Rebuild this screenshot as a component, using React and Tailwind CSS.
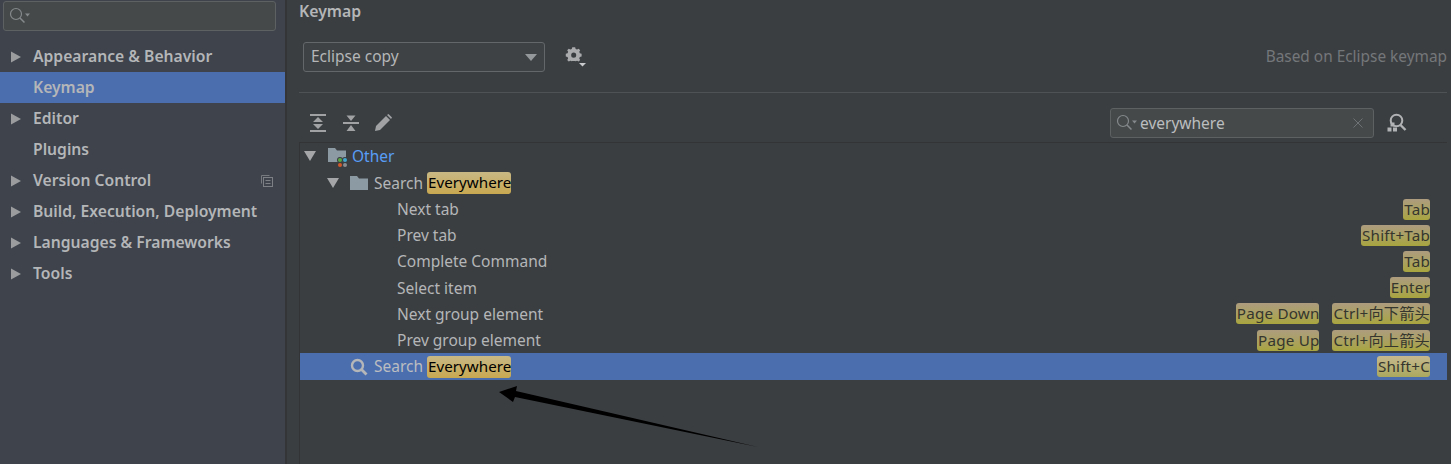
import React from 'react';

const font = { fontFamily: '"Noto Sans", "Noto Sans CJK SC", sans-serif' };

const sections = [
  { name: 'Appearance & Behavior', arrow: true },
  { name: 'Keymap', active: true },
  { name: 'Editor', arrow: true },
  { name: 'Plugins' },
  { name: 'Version Control', arrow: true, copy: true },
  { name: 'Build, Execution, Deployment', arrow: true },
  { name: 'Languages & Frameworks', arrow: true },
  { name: 'Tools', arrow: true },
];

const actions = [
  { name: 'Next tab', keys: ['Tab'] },
  { name: 'Prev tab', keys: ['Shift+Tab'] },
  { name: 'Complete Command', keys: ['Tab'] },
  { name: 'Select item', keys: ['Enter'] },
  { name: 'Next group element', keys: ['Page Down', 'Ctrl+向下箭头'] },
  { name: 'Prev group element', keys: ['Page Up', 'Ctrl+向上箭头'] },
];

function RightArrow() {
  return (
    <svg width="10" height="12" viewBox="0 0 10 12" className="shrink-0">
      <path d="M0 0.5 L10 6 L0 11.5 Z" fill="#9a9c9e" />
    </svg>
  );
}

function DownArrow() {
  return (
    <svg width="12" height="10" viewBox="0 0 12 10" className="shrink-0">
      <path d="M0 0 L12 0 L6 10 Z" fill="#a4a6a8" />
    </svg>
  );
}

function SearchGlass() {
  return (
    <svg width="24" height="18" viewBox="0 0 24 18" className="shrink-0">
      <circle cx="7" cy="7" r="5.5" fill="none" stroke="#85898b" strokeWidth="1.2" />
      <path d="M11 11 L15.5 15.5" stroke="#85898b" strokeWidth="1.5" />
      <path d="M16 6.5 L21 6.5 L18.5 9.5 Z" fill="#85898b" />
    </svg>
  );
}

function Folder({ width = 18, height = 14 }) {
  return (
    <svg width={width} height={height} viewBox="0 0 18 14" className="shrink-0">
      <path d="M0 0 L7 0 L9 2.5 L18 2.5 L18 14 L0 14 Z" fill="#8c9aa3" />
    </svg>
  );
}

function Badge({ label, selected }) {
  const tone = selected ? 'from-[#c6b98e] to-[#aaa85e]' : 'from-[#ad9c7e] to-[#a8a53e]';
  return (
    <span className={`flex h-[21px] items-center rounded-[3px] bg-gradient-to-b ${tone} pl-px text-[15.2px] tracking-[0.2px] whitespace-nowrap text-[#35362e]`}>
      {label}
    </span>
  );
}

function Highlight() {
  return (
    <span className="ml-[4px] flex h-[22px] w-[84px] items-center rounded-[3px] bg-gradient-to-b from-[#c8b884] to-[#c8a850] pl-px text-[15.2px] text-black">
      Everywhere
    </span>
  );
}

export default function App() {
  return (
    <div style={font} className="relative flex h-[464px] w-[1451px] overflow-hidden bg-[#3b3e41] text-[15.5px] text-[#b4b6b8]">
      <aside className="flex w-[287px] shrink-0 flex-col border-r-2 border-[#333537] bg-[#3e434c]">
        <div className="h-[41px] px-[3px] pt-px">
          <div className="flex h-[30px] w-[273px] items-center rounded-[3px] border border-[#5e6162] bg-[#45494a] pl-[5px]">
            <SearchGlass />
          </div>
        </div>
        {sections.map((s) => (
          <div key={s.name} className={`flex h-[31px] items-center pl-[11px] ${s.active ? 'bg-[#4b6eaf]' : ''}`}>
            <div className="w-[22px]">{s.arrow && <RightArrow />}</div>
            <span className="text-[15.7px] font-semibold whitespace-nowrap">{s.name}</span>
            {s.copy && (
              <svg width="12" height="12" viewBox="0 0 12 12" className="ml-auto mr-[12px]">
                <path d="M0.5 8.5 V0.5 H8.5" fill="none" stroke="#777b7f" />
                <rect x="2.5" y="2.5" width="9" height="9" fill="none" stroke="#7d8185" />
                <path d="M4.5 5.5 H9.5 M4.5 8.5 H9.5" stroke="#7d8185" />
              </svg>
            )}
          </div>
        ))}
      </aside>

      <main className="min-w-0 flex-1 pr-[4px] pl-[12px]">
        <h1 className="flex h-[24px] items-center text-[15.8px] font-semibold">Keymap</h1>

        <div className="mt-[18px] flex h-[30px] items-center pl-[4px]">
          <div className="flex h-[30px] w-[242px] items-center justify-between rounded-[3px] border border-[#646769] bg-[#3f4244] pr-[7px] pl-[7px]">
            <span>Eclipse copy</span>
            <svg width="12" height="7" viewBox="0 0 12 7"><path d="M0 0 L12 0 L6 7 Z" fill="#95989a" /></svg>
          </div>
          <svg width="24" height="24" viewBox="0 0 24 24" className="ml-[20px]">
            <path
              fillRule="evenodd"
              d="M8 1 L12 1 L12.7 3.5 L14.6 4.3 L16.9 3 L19 5.2 L17.7 7.4 L18.5 9.3 L21 10 L21 14 L18.5 14.7 L17.7 16.6 L19 18.8 L16.9 21 L14.6 19.7 L12.7 20.5 L12 20 L8 20 L7.3 20.5 L5.4 19.7 L3.1 21 L1 18.8 L2.3 16.6 L1.5 14.7 L-1 14 L-1 10 L1.5 9.3 L2.3 7.4 L1 5.2 L3.1 3 L5.4 4.3 L7.3 3.5 Z M10 8.5 A3.5 3.5 0 1 0 10 15.5 A3.5 3.5 0 1 0 10 8.5 Z"
              fill="#a9abad"
              transform="translate(1.5 1.5) scale(0.72)"
            />
            <path d="M14 18 L21 18 L17.5 21.5 Z" fill="#c8cacc" />
          </svg>
          <span className="ml-auto text-[15.4px] text-[#74777a]">Based on Eclipse keymap</span>
        </div>

        <div className="mt-[20px] h-px bg-[#4f5254]" />

        <div className="mt-[15px] flex h-[30px] items-center">
          <div className="flex items-center gap-[16px] pl-[10px]">
            <svg width="18" height="20" viewBox="0 0 18 20">
              <path d="M1 2 H17 M1 18 H17" stroke="#a0a2a4" strokeWidth="2" />
              <path d="M9 4 L14 9 H4 Z M9 16 L14 11 H4 Z" fill="#a0a2a4" />
            </svg>
            <svg width="16" height="18" viewBox="0 0 16 18">
              <path d="M0 9 H16" stroke="#a0a2a4" strokeWidth="2" />
              <path d="M8 7 L12.5 1.5 H3.5 Z M8 11 L12.5 17 H3.5 Z" fill="#a0a2a4" />
            </svg>
            <svg width="18" height="18" viewBox="0 0 18 18" className="-ml-[1px]">
              <path d="M1 17 L2 12 L12 2 L16 6 L6 16 Z" fill="#a0a2a4" />
              <path d="M13 1 L14.5 0 L18 3.5 L17 5 Z" fill="#a0a2a4" />
            </svg>
          </div>
          <div className="ml-auto flex items-center pr-[40px]">
            <div className="flex h-[30px] w-[264px] items-center rounded-[3px] border border-[#5e6162] bg-[#45494a] pl-[5px]">
              <SearchGlass />
              <span className="pt-px text-[#bbbdbf]">everywhere</span>
              <svg width="10" height="10" viewBox="0 0 10 10" className="mr-[10px] ml-auto">
                <path d="M0.5 0.5 L9.5 9.5 M9.5 0.5 L0.5 9.5" stroke="#6f7274" />
              </svg>
            </div>
            <svg width="20" height="20" viewBox="0 0 20 20" className="ml-[13px]">
              <circle cx="9.5" cy="7.5" r="5.8" fill="none" stroke="#b0b2b4" strokeWidth="2" />
              <path d="M13.5 12 L18.5 17" stroke="#b0b2b4" strokeWidth="2.4" />
              <rect x="0.5" y="14.5" width="4" height="4" fill="#b0b2b4" />
              <rect x="6" y="14.5" width="4" height="4" fill="#b0b2b4" />
              <rect x="3.5" y="9.5" width="4" height="4" fill="#b0b2b4" />
            </svg>
          </div>
        </div>

        <div className="mt-[4px] h-[324px] border-t border-l border-[#323436]">
          <div className="flex h-[26.5px] items-center pl-[4px]">
            <DownArrow />
            <div className="relative ml-[12px] h-[16px] w-[18px]">
              <Folder height={14} />
              <span className="absolute right-[4px] bottom-[2px] h-[4px] w-[4px] rounded-full bg-[#5aa845] ring-1 ring-[#3b3e41]" />
              <span className="absolute -right-[1px] bottom-[2px] h-[4px] w-[4px] rounded-full bg-[#40a8d0] ring-1 ring-[#3b3e41]" />
              <span className="absolute right-[4px] -bottom-[3px] h-[4px] w-[4px] rounded-full bg-[#d0592a] ring-1 ring-[#3b3e41]" />
              <span className="absolute -right-[1px] -bottom-[3px] h-[4px] w-[4px] rounded-full bg-[#8a8d90] ring-1 ring-[#3b3e41]" />
            </div>
            <span className="ml-[6px] text-[#589df6]">Other</span>
          </div>
          <div className="flex h-[26.5px] items-center pl-[27px]">
            <DownArrow />
            <div className="ml-[11px]"><Folder /></div>
            <span className="ml-[6px] pt-px">Search</span>
            <Highlight />
          </div>
          {actions.map((a) => (
            <div key={a.name} className="flex h-[26.2px] items-center pr-[17px] pl-[97px]">
              <span className="pt-px">{a.name}</span>
              <div className="ml-auto flex gap-[13px]">
                {a.keys.map((k) => <Badge key={k} label={k} />)}
              </div>
            </div>
          ))}
          <div className="flex h-[27px] items-center bg-[#4b6eaf] pr-[17px] pl-[50px]">
            <svg width="18" height="18" viewBox="0 0 18 18" className="shrink-0">
              <circle cx="7.5" cy="7.5" r="5.5" fill="none" stroke="#b4b6b8" strokeWidth="2.4" />
              <path d="M11.5 11.5 L16.5 16.5" stroke="#b4b6b8" strokeWidth="2.8" />
            </svg>
            <span className="ml-[6px] text-[#bbbdc0]">Search</span>
            <Highlight />
            <div className="ml-auto"><Badge label="Shift+C" selected /></div>
          </div>
        </div>
      </main>

      <svg width="1451" height="464" viewBox="0 0 1451 464" className="pointer-events-none absolute top-0 left-0">
        <path d="M499 392 L517 386 L516 391 L758 447 L515 397 L513 402 Z" fill="#000" />
      </svg>
    </div>
  );
}
